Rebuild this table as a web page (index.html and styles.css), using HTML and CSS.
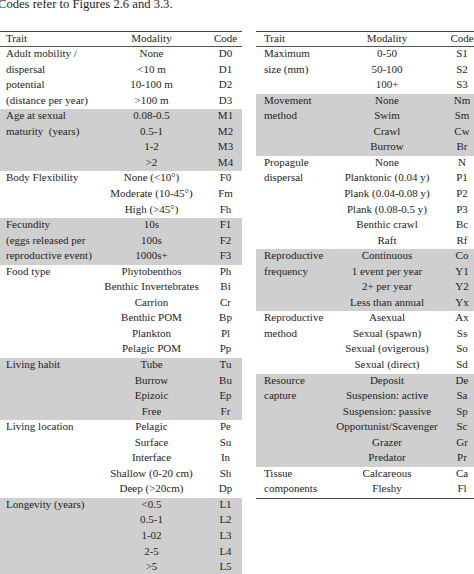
FILE: index.html
```html
<!DOCTYPE html>
<html lang="en">
<head>
<meta charset="utf-8">
<title>Trait codes</title>
<link rel="stylesheet" href="styles.css">
</head>
<body>
<p class="caption">Codes refer to Figures 2.6 and 3.3.</p>
<div class="tables">
  <table class="traits left">
    <colgroup><col class="c-trait"><col class="c-mod"><col class="c-code"></colgroup>
    <thead>
      <tr><th class="trait">Trait</th><th>Modality</th><th>Code</th></tr>
    </thead>
    <tbody>
      <tr><td class="trait">Adult mobility /</td><td>None</td><td>D0</td></tr>
      <tr><td class="trait">dispersal</td><td>&lt;10 m</td><td>D1</td></tr>
      <tr><td class="trait">potential</td><td>10-100 m</td><td>D2</td></tr>
      <tr><td class="trait">(distance per year)</td><td>&gt;100 m</td><td>D3</td></tr>
    </tbody>
    <tbody class="shade">
      <tr><td class="trait">Age at sexual</td><td>0.08-0.5</td><td>M1</td></tr>
      <tr><td class="trait">maturity &nbsp;(years)</td><td>0.5-1</td><td>M2</td></tr>
      <tr><td class="trait"></td><td>1-2</td><td>M3</td></tr>
      <tr><td class="trait"></td><td>&gt;2</td><td>M4</td></tr>
    </tbody>
    <tbody>
      <tr><td class="trait">Body Flexibility</td><td>None (&lt;10°)</td><td>F0</td></tr>
      <tr><td class="trait"></td><td>Moderate (10-45°)</td><td>Fm</td></tr>
      <tr><td class="trait"></td><td>High (&gt;45°)</td><td>Fh</td></tr>
    </tbody>
    <tbody class="shade">
      <tr><td class="trait">Fecundity</td><td>10s</td><td>F1</td></tr>
      <tr><td class="trait">(eggs released per</td><td>100s</td><td>F2</td></tr>
      <tr><td class="trait">reproductive event)</td><td>1000s+</td><td>F3</td></tr>
    </tbody>
    <tbody>
      <tr><td class="trait">Food type</td><td>Phytobenthos</td><td>Ph</td></tr>
      <tr><td class="trait"></td><td>Benthic Invertebrates</td><td>Bi</td></tr>
      <tr><td class="trait"></td><td>Carrion</td><td>Cr</td></tr>
      <tr><td class="trait"></td><td>Benthic POM</td><td>Bp</td></tr>
      <tr><td class="trait"></td><td>Plankton</td><td>Pl</td></tr>
      <tr><td class="trait"></td><td>Pelagic POM</td><td>Pp</td></tr>
    </tbody>
    <tbody class="shade">
      <tr><td class="trait">Living habit</td><td>Tube</td><td>Tu</td></tr>
      <tr><td class="trait"></td><td>Burrow</td><td>Bu</td></tr>
      <tr><td class="trait"></td><td>Epizoic</td><td>Ep</td></tr>
      <tr><td class="trait"></td><td>Free</td><td>Fr</td></tr>
    </tbody>
    <tbody>
      <tr><td class="trait">Living location</td><td>Pelagic</td><td>Pe</td></tr>
      <tr><td class="trait"></td><td>Surface</td><td>Su</td></tr>
      <tr><td class="trait"></td><td>Interface</td><td>In</td></tr>
      <tr><td class="trait"></td><td>Shallow (0-20 cm)</td><td>Sh</td></tr>
      <tr><td class="trait"></td><td>Deep (&gt;20cm)</td><td>Dp</td></tr>
    </tbody>
    <tbody class="shade">
      <tr><td class="trait">Longevity (years)</td><td>&lt;0.5</td><td>L1</td></tr>
      <tr><td class="trait"></td><td>0.5-1</td><td>L2</td></tr>
      <tr><td class="trait"></td><td>1-02</td><td>L3</td></tr>
      <tr><td class="trait"></td><td>2-5</td><td>L4</td></tr>
      <tr><td class="trait"></td><td>&gt;5</td><td>L5</td></tr>
    </tbody>
  </table>

  <table class="traits right">
    <colgroup><col class="c-trait"><col class="c-mod"><col class="c-code"></colgroup>
    <thead>
      <tr><th class="trait">Trait</th><th>Modality</th><th>Code</th></tr>
    </thead>
    <tbody>
      <tr><td class="trait">Maximum</td><td>0-50</td><td>S1</td></tr>
      <tr><td class="trait">size (mm)</td><td>50-100</td><td>S2</td></tr>
      <tr><td class="trait"></td><td>100+</td><td>S3</td></tr>
    </tbody>
    <tbody class="shade">
      <tr><td class="trait">Movement</td><td>None</td><td>Nm</td></tr>
      <tr><td class="trait">method</td><td>Swim</td><td>Sm</td></tr>
      <tr><td class="trait"></td><td>Crawl</td><td>Cw</td></tr>
      <tr><td class="trait"></td><td>Burrow</td><td>Br</td></tr>
    </tbody>
    <tbody>
      <tr><td class="trait">Propagule</td><td>None</td><td>N</td></tr>
      <tr><td class="trait">dispersal</td><td>Planktonic (0.04 y)</td><td>P1</td></tr>
      <tr><td class="trait"></td><td>Plank (0.04-0.08 y)</td><td>P2</td></tr>
      <tr><td class="trait"></td><td>Plank (0.08-0.5 y)</td><td>P3</td></tr>
      <tr><td class="trait"></td><td>Benthic crawl</td><td>Bc</td></tr>
      <tr><td class="trait"></td><td>Raft</td><td>Rf</td></tr>
    </tbody>
    <tbody class="shade">
      <tr><td class="trait">Reproductive</td><td>Continuous</td><td>Co</td></tr>
      <tr><td class="trait">frequency</td><td>1 event per year</td><td>Y1</td></tr>
      <tr><td class="trait"></td><td>2+ per year</td><td>Y2</td></tr>
      <tr><td class="trait"></td><td>Less than annual</td><td>Yx</td></tr>
    </tbody>
    <tbody>
      <tr><td class="trait">Reproductive</td><td>Asexual</td><td>Ax</td></tr>
      <tr><td class="trait">method</td><td>Sexual (spawn)</td><td>Ss</td></tr>
      <tr><td class="trait"></td><td>Sexual (ovigerous)</td><td>So</td></tr>
      <tr><td class="trait"></td><td>Sexual (direct)</td><td>Sd</td></tr>
    </tbody>
    <tbody class="shade">
      <tr><td class="trait">Resource</td><td>Deposit</td><td>De</td></tr>
      <tr><td class="trait">capture</td><td>Suspension: active</td><td>Sa</td></tr>
      <tr><td class="trait"></td><td>Suspension: passive</td><td>Sp</td></tr>
      <tr><td class="trait"></td><td>Opportunist/Scavenger</td><td>Sc</td></tr>
      <tr><td class="trait"></td><td>Grazer</td><td>Gr</td></tr>
      <tr><td class="trait"></td><td>Predator</td><td>Pr</td></tr>
    </tbody>
    <tbody class="last">
      <tr><td class="trait">Tissue</td><td>Calcareous</td><td>Ca</td></tr>
      <tr><td class="trait">components</td><td>Fleshy</td><td>Fl</td></tr>
    </tbody>
  </table>
</div>
</body>
</html>
```

FILE: styles.css
```css
html, body {
  margin: 0;
  padding: 0;
  overflow: hidden;
  background: #ffffff;
}

body {
  width: 474px;
  height: 574px;
  font-family: "Liberation Serif", "Times New Roman", serif;
  color: #1e1e1e;
}

.caption {
  margin: 0 0 21.5px -2px;
  font-size: 12.6px;
  line-height: 9px;
  white-space: nowrap;
}

.tables {
  display: flex;
  align-items: flex-start;
  gap: 14px;
  width: 500px;
}

.traits {
  border-collapse: collapse;
  table-layout: fixed;
  flex: none;
  font-size: 11px;
  border-top: 1.5px solid #454545;
}

.traits th,
.traits td {
  padding: 0 0 2px 0;
  line-height: 13.55px;
  height: 13.55px;
  text-align: center;
  font-weight: normal;
  white-space: nowrap;
  overflow: visible;
}

.traits th {
  height: 13.5px;
  padding-bottom: 1px;
  border-bottom: 1px solid #555555;
}

.traits .trait {
  text-align: left;
}

.shade td {
  background: #cfcfcf;
}

.left {
  width: 242px;
}
.left .c-trait { width: 94px; }
.left .c-mod { width: 115px; }
.left .c-code { width: 33px; }
.left .trait { padding-left: 6px; }

.right {
  width: 224px;
}
.right .c-trait { width: 74px; }
.right .c-mod { width: 114px; }
.right .c-code { width: 36px; }
.right .trait { padding-left: 8px; }

.last tr:last-child td {
  border-bottom: 1.5px solid #454545;
}
```
